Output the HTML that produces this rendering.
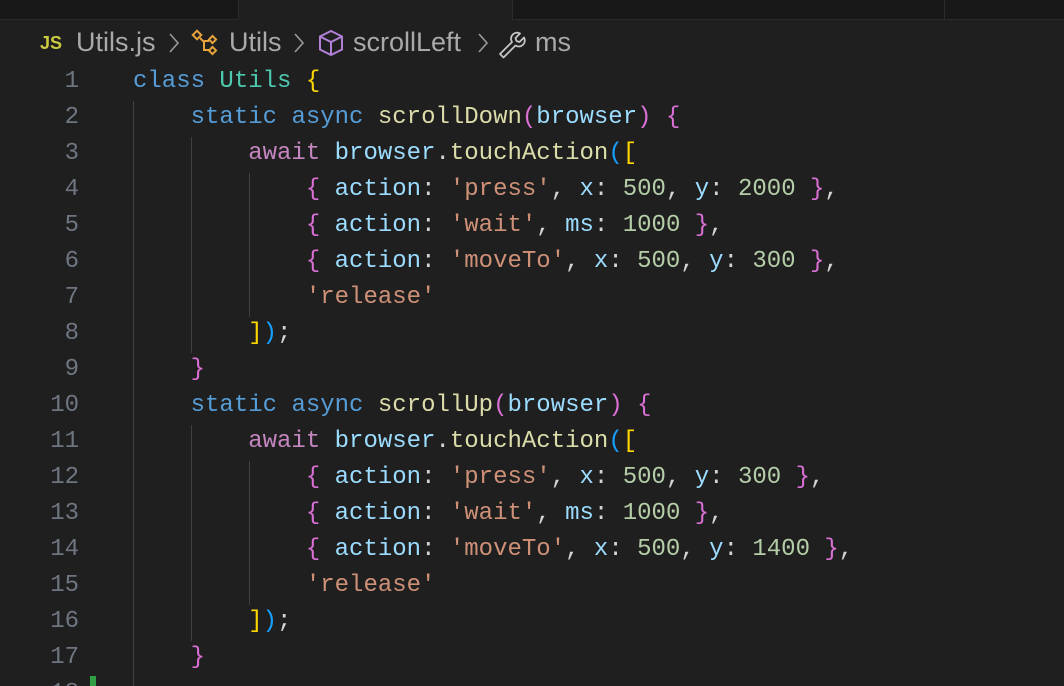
<!DOCTYPE html><html style="overflow:hidden;height:686px"><head><style>
body{margin:0;width:1064px;height:686px;background:#1f1f1f;overflow:hidden;position:relative;font-family:"Liberation Mono",monospace}
.tabs{position:absolute;left:0;top:0;width:1064px;height:19px;background:#181818;border-bottom:1px solid #2b2b2b}
.act{position:absolute;left:238px;top:0;width:273px;height:20px;background:#1f1f1f;border-left:1px solid #2b2b2b;border-right:1px solid #2b2b2b}
.t2{position:absolute;left:944px;top:0;height:19px;border-left:1px solid #2b2b2b}
.bc{position:absolute;top:27px;font:27px "Liberation Sans",sans-serif;color:#a9a9a9;white-space:nowrap;line-height:30px}
.sep{position:absolute;top:32px}
.ln{position:absolute;left:0;width:79px;text-align:right;color:#6e7681;font-size:24px;line-height:36px}
.cd{position:absolute;left:133px;font-size:24px;line-height:36px;white-space:pre;color:#d4d4d4}
.g{position:absolute;width:1px;background:#404040}
.k{color:#569cd6}.c{color:#4ec9b0}.y{color:#ffd700}.f{color:#dcdcaa}.p{color:#9cdcfe}.a{color:#c586c0}.s{color:#ce9178}.n{color:#b5cea8}.m{color:#da70d6}.b{color:#179fff}
</style></head><body>
<div class="tabs"></div><div class="act"></div><div class="t2"></div>
<div class="bc" style="left:40px;top:32px;color:#cbcb41;font:bold 18px 'Liberation Sans',sans-serif;line-height:22px">JS</div>
<div class="bc" style="left:76px">Utils.js</div>
<svg class="sep" style="left:167px" width="14" height="22" viewBox="0 0 14 22"><path d="M3 2l8 9-8 9" fill="none" stroke="#999" stroke-width="1.6"/></svg>
<svg style="position:absolute;left:191px;top:29px" width="28" height="28" viewBox="0 0 28 28"><g fill="none" stroke="#e8a33d" stroke-width="2"><rect x="3" y="3" width="6" height="6" transform="rotate(45 6 6)"/><rect x="19" y="8" width="5" height="5" transform="rotate(45 21.5 10.5)"/><rect x="19" y="19" width="5" height="5" transform="rotate(45 21.5 21.5)"/><path d="M9 9l4 4v8h5M13 12h5"/></g></svg>
<div class="bc" style="left:229px">Utils</div>
<svg class="sep" style="left:292px" width="14" height="22" viewBox="0 0 14 22"><path d="M3 2l8 9-8 9" fill="none" stroke="#999" stroke-width="1.6"/></svg>
<svg style="position:absolute;left:317px;top:29px" width="28" height="28" viewBox="0 0 28 28"><g fill="none" stroke="#b180d7" stroke-width="2"><path d="M14 2l11 5.5v13L14 26 3 20.5v-13z M3 7.5l11 5.5 11-5.5 M14 13v13"/></g></svg>
<div class="bc" style="left:353px">scrollLeft</div>
<svg class="sep" style="left:476px" width="14" height="22" viewBox="0 0 14 22"><path d="M3 2l8 9-8 9" fill="none" stroke="#999" stroke-width="1.6"/></svg>
<svg style="position:absolute;left:498px;top:29px" width="30" height="30" viewBox="0 0 30 30"><path d="M2 25l12-12a6 6 0 0 1 8-8.5l-4.5 4.5 1 3 3 1 4.5-4.5a6 6 0 0 1-8.5 8L5.5 28.5z" fill="none" stroke="#c5c5c5" stroke-width="1.8" stroke-linejoin="round"/></svg>
<div class="bc" style="left:535px">ms</div>
<div class="g" style="left:133px;top:101px;height:585px"></div>
<div class="g" style="left:191px;top:137px;height:216px"></div>
<div class="g" style="left:191px;top:425px;height:216px"></div>
<div class="g" style="left:249px;top:173px;height:144px"></div>
<div class="g" style="left:249px;top:461px;height:144px"></div>
<div style="position:absolute;left:90px;top:676px;width:6px;height:10px;background:#2ea043"></div>
<div class="ln" style="top:64px">1<br>2<br>3<br>4<br>5<br>6<br>7<br>8<br>9<br>10<br>11<br>12<br>13<br>14<br>15<br>16<br>17<br>18</div>
<div class="cd" style="top:64px"><span class="k">class</span> <span class="c">Utils</span> <span class="y">{</span>
    <span class="k">static</span> <span class="k">async</span> <span class="f">scrollDown</span><span class="m">(</span><span class="p">browser</span><span class="m">)</span> <span class="m">{</span>
        <span class="a">await</span> <span class="p">browser</span>.<span class="f">touchAction</span><span class="b">(</span><span class="y">[</span>
            <span class="m">{</span> <span class="p">action</span>: <span class="s">'press'</span>, <span class="p">x</span>: <span class="n">500</span>, <span class="p">y</span>: <span class="n">2000</span> <span class="m">}</span>,
            <span class="m">{</span> <span class="p">action</span>: <span class="s">'wait'</span>, <span class="p">ms</span>: <span class="n">1000</span> <span class="m">}</span>,
            <span class="m">{</span> <span class="p">action</span>: <span class="s">'moveTo'</span>, <span class="p">x</span>: <span class="n">500</span>, <span class="p">y</span>: <span class="n">300</span> <span class="m">}</span>,
            <span class="s">'release'</span>
        <span class="y">]</span><span class="b">)</span>;
    <span class="m">}</span>
    <span class="k">static</span> <span class="k">async</span> <span class="f">scrollUp</span><span class="m">(</span><span class="p">browser</span><span class="m">)</span> <span class="m">{</span>
        <span class="a">await</span> <span class="p">browser</span>.<span class="f">touchAction</span><span class="b">(</span><span class="y">[</span>
            <span class="m">{</span> <span class="p">action</span>: <span class="s">'press'</span>, <span class="p">x</span>: <span class="n">500</span>, <span class="p">y</span>: <span class="n">300</span> <span class="m">}</span>,
            <span class="m">{</span> <span class="p">action</span>: <span class="s">'wait'</span>, <span class="p">ms</span>: <span class="n">1000</span> <span class="m">}</span>,
            <span class="m">{</span> <span class="p">action</span>: <span class="s">'moveTo'</span>, <span class="p">x</span>: <span class="n">500</span>, <span class="p">y</span>: <span class="n">1400</span> <span class="m">}</span>,
            <span class="s">'release'</span>
        <span class="y">]</span><span class="b">)</span>;
    <span class="m">}</span></div>
</body></html>
